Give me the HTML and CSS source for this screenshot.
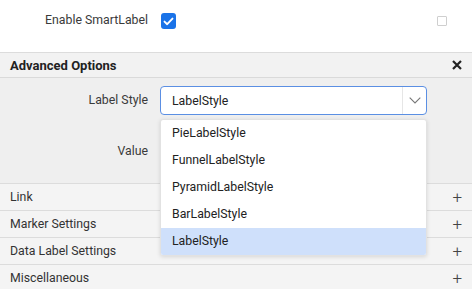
FILE: index.html
```html
<!DOCTYPE html>
<html lang="en">
<head>
    <meta charset="UTF-8">
    <title>Chart Properties</title>
    <link rel="stylesheet" href="styles.css">
</head>
<body>
    <div class="container">
        <div class="top-row">
            <span class="field-label">Enable SmartLabel</span>
            <span class="check checked">
                <svg width="11" height="9" viewBox="0 0 11 9"><path d="M1.5 4.6 L4.2 7.2 L9.5 1.6" fill="none" stroke="#fff" stroke-width="1.9" stroke-linecap="round" stroke-linejoin="round"/></svg>
            </span>
            <span class="check small"></span>
        </div>

        <div class="section-header open">
            <span>Advanced Options</span>
            <svg class="close-icon" width="10" height="10" viewBox="0 0 10 10"><path d="M1 1 L9 9 M9 1 L1 9" stroke="#222" stroke-width="2.2"/></svg>
        </div>

        <div class="panel">
            <div class="form-row">
                <span class="field-label">Label Style</span>
                <div class="select-wrap">
                    <div class="select">
                        <span class="select-text">LabelStyle</span>
                        <span class="select-arrow">
                            <svg width="12" height="7" viewBox="0 0 12 7"><path d="M0.7 0.7 L6 6 L11.3 0.7" fill="none" stroke="#777" stroke-width="1.1"/></svg>
                        </span>
                    </div>
                    <ul class="dropdown">
                        <li>PieLabelStyle</li>
                        <li>FunnelLabelStyle</li>
                        <li>PyramidLabelStyle</li>
                        <li>BarLabelStyle</li>
                        <li class="selected">LabelStyle</li>
                    </ul>
                </div>
            </div>
            <div class="form-row value-row">
                <span class="field-label">Value</span>
            </div>
        </div>

        <div class="section-header">
            <span>Link</span>
            <span class="plus">+</span>
        </div>
        <div class="section-header">
            <span>Marker Settings</span>
            <span class="plus">+</span>
        </div>
        <div class="section-header">
            <span>Data Label Settings</span>
            <span class="plus">+</span>
        </div>
        <div class="section-header">
            <span>Miscellaneous</span>
            <span class="plus">+</span>
        </div>
    </div>
</body>
</html>
```

FILE: styles.css
```css
* {
    margin: 0;
    padding: 0;
    box-sizing: border-box;
}

body {
    font-family: Roboto, "Liberation Sans", sans-serif;
    font-size: 12.3px;
    color: #333;
    background: #fff;
}

.container {
    width: 472px;
}

.top-row {
    height: 52px;
    display: flex;
    align-items: flex-start;
    padding-top: 12px;
}

.field-label {
    width: 148px;
    text-align: right;
    line-height: 17px;
    color: #3a3a3a;
}

.check {
    display: flex;
    align-items: center;
    justify-content: center;
}

.check.checked {
    width: 15px;
    height: 16px;
    margin-left: 13px;
    margin-top: 1px;
    background: #1a73e8;
    border-radius: 3px;
}

.check.small {
    width: 10px;
    height: 10px;
    margin-left: auto;
    margin-right: 25px;
    margin-top: 4px;
    border: 1px solid #cfcfcf;
    border-radius: 1px;
}

.section-header {
    height: 27px;
    display: flex;
    align-items: center;
    justify-content: space-between;
    padding: 0 10px;
    background: #f4f4f4;
    border-top: 1px solid #dcdcdc;
    color: #333;
}

.section-header.open {
    height: 26px;
    background: #f2f2f2;
    border-bottom: 1px solid #dadada;
    font-size: 13px;
    font-weight: 700;
    color: #222;
}

.close-icon {
    margin-right: 0;
}

.plus {
    font-size: 17px;
    font-weight: 300;
    color: #444;
    margin-right: 0;
}

.panel {
    background: #efefef;
    height: 105px;
    padding-top: 8px;
}

.form-row {
    display: flex;
    align-items: center;
}

.form-row .field-label {
    margin-right: 12px;
}

.value-row {
    margin-top: 28px;
}

.select-wrap {
    position: relative;
}

.select {
    width: 267px;
    height: 29px;
    display: flex;
    align-items: center;
    background: #fff;
    border: 1px solid #5b8fe3;
    border-radius: 4px;
}

.select-text {
    flex: 1;
    padding-left: 11px;
    color: #222;
}

.select-arrow {
    width: 24px;
    height: 27px;
    display: flex;
    align-items: center;
    justify-content: center;
    border-left: 1px solid #e6e6e6;
}

.dropdown {
    position: absolute;
    top: 33px;
    left: 0;
    width: 267px;
    list-style: none;
    background: #fff;
    border: 1px solid #e2e2e2;
    border-radius: 3px;
    box-shadow: 0 1px 4px rgba(0, 0, 0, 0.12);
    z-index: 5;
    overflow: hidden;
}

.dropdown li {
    height: 27px;
    line-height: 27px;
    padding-left: 11px;
    color: #222;
}

.dropdown li.selected {
    background: #cfe0fb;
}
```
